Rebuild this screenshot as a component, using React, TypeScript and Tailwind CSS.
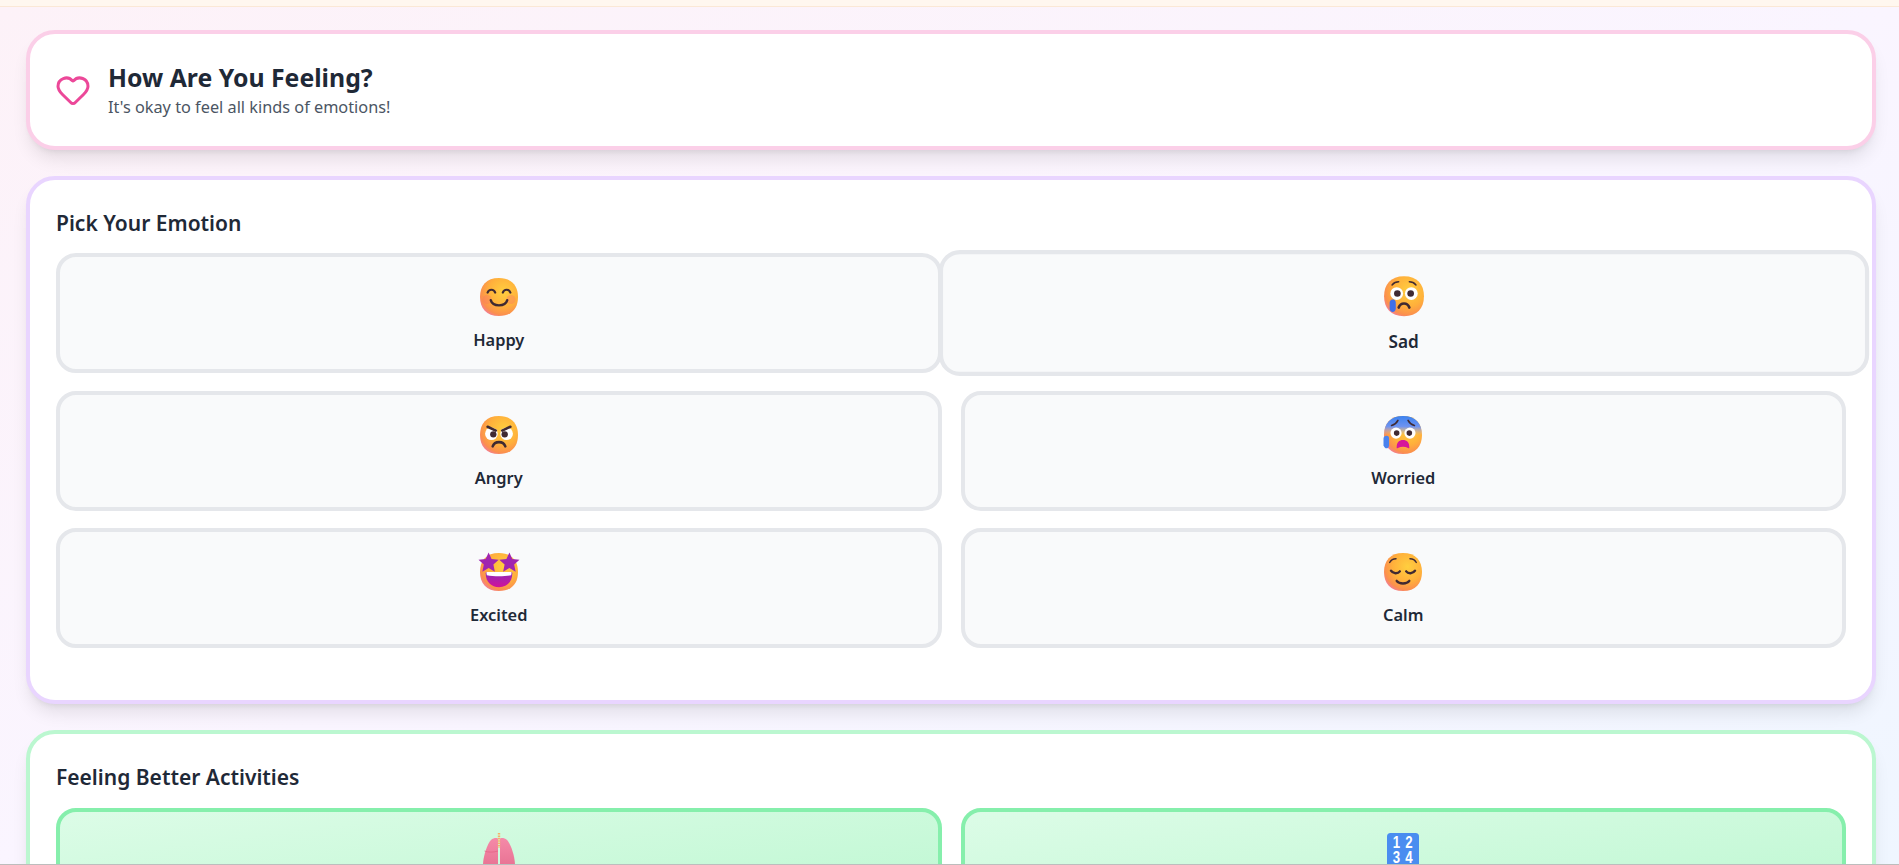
import { useId, type ReactNode } from 'react';
import { Heart } from 'lucide-react';

const DARK = '#402A32';

// rounded face blob shared by the emoji drawings
function Face({ children, size = 38 }: { children?: ReactNode; size?: number }) {
    const id = useId();
    return (
        <svg width={size} height={size} viewBox="1 1 30 30" className="overflow-visible">
            <defs>
                <radialGradient id={id + 'f'} cx="0.62" cy="0.36" r="0.72">
                    <stop offset="0" stopColor="#FFCF3F" />
                    <stop offset="0.55" stopColor="#FFB03B" />
                    <stop offset="0.85" stopColor="#FB8F4E" />
                    <stop offset="1" stopColor="#F27C9C" />
                </radialGradient>
            </defs>
            <path d="M16 1C26 1 31 7 31 16S26 31 16 31 1 25 1 16 6 1 16 1Z" fill={`url(#${id}f)`} />
            {children}
        </svg>
    );
}

function HappyFace() {
    return (
        <Face>
            <circle cx="6.5" cy="18" r="3.6" fill="#F9736B" opacity="0.35" />
            <circle cx="25.5" cy="18" r="3.6" fill="#F9736B" opacity="0.35" />
            <path d="M7 12.5C8 9.5 12 9.5 13 12.5M19 12.5C20 9.5 24 9.5 25 12.5" fill="none" stroke={DARK} strokeWidth="1.7" strokeLinecap="round" />
            <path d="M9.5 18.5C11 24 21 24 22.5 18.5" fill="none" stroke={DARK} strokeWidth="1.9" strokeLinecap="round" />
        </Face>
    );
}

function SadFace() {
    return (
        <Face>
            <circle cx="10.5" cy="14" r="4.8" fill="#fff" />
            <circle cx="21.5" cy="14" r="4.8" fill="#fff" />
            <circle cx="11" cy="14" r="2.5" fill={DARK} />
            <circle cx="21" cy="14" r="2.5" fill={DARK} />
            <path d="M7 7.5C8.5 5.8 10.5 5.2 12 5.2M25 7.5C23.5 5.8 21.5 5.2 20 5.2" fill="none" stroke={DARK} strokeWidth="1.1" strokeLinecap="round" />
            <path d="M12 24.5C13.5 20.5 18.5 20.5 20 24.5" fill="none" stroke={DARK} strokeWidth="2" strokeLinecap="round" />
            <path d="M7.5 18.5C9.5 18.5 9.8 20 9.8 21.5V25C9.8 27 8.6 27.8 7.5 27.8S5.2 27 5.2 25V21C5.2 19.5 6 18.5 7.5 18.5Z" fill="#3F6FEA" />
        </Face>
    );
}

function AngryFace() {
    return (
        <Face>
            <circle cx="10" cy="15" r="5" fill="#fff" />
            <circle cx="22" cy="15" r="5" fill="#fff" />
            <circle cx="11.5" cy="15.5" r="2.5" fill={DARK} />
            <circle cx="20.5" cy="15.5" r="2.5" fill={DARK} />
            <path d="M7 9.5L13.5 12.5M25 9.5L18.5 12.5" fill="none" stroke={DARK} strokeWidth="2" strokeLinecap="round" />
            <path d="M11 25C12.5 20.5 19.5 20.5 21 25" fill="none" stroke={DARK} strokeWidth="2" strokeLinecap="round" />
        </Face>
    );
}

function WorriedFace() {
    const id = useId();
    return (
        <Face>
            <defs>
                <linearGradient id={id} x1="0" y1="0" x2="0" y2="1">
                    <stop offset="0" stopColor="#3B82F0" />
                    <stop offset="0.55" stopColor="#6E93F0" />
                    <stop offset="1" stopColor="#B9B4E8" stopOpacity="0" />
                </linearGradient>
            </defs>
            <path d="M16 1C26 1 31 7 31 16H1C1 7 6 1 16 1Z" fill={`url(#${id})`} />
            <circle cx="10.5" cy="14.5" r="4.4" fill="#fff" />
            <circle cx="21.5" cy="14.5" r="4.4" fill="#fff" />
            <circle cx="11" cy="14.5" r="2.2" fill={DARK} />
            <circle cx="21" cy="14.5" r="2.2" fill={DARK} />
            <path d="M7 8.5C9 8 11 6.5 12 4.5M25 8.5C23 8 21 6.5 20 4.5" fill="none" stroke={DARK} strokeWidth="1.3" strokeLinecap="round" />
            <path d="M11 26C11 21.5 13 20 16 20S21 21.5 21 26C21 26.5 20.5 26.5 20 26.2C17.5 25 14.5 25 12 26.2C11.5 26.5 11 26.5 11 26Z" fill="#D6149B" />
            <path d="M3 16.5C4.5 16.5 5 17.5 5 19V24C5 25.5 4 26.5 3 26.5S1 25.5 0.6 24V19C0.6 17.5 1.5 16.5 3 16.5Z" fill="#4A82EE" />
        </Face>
    );
}

function ExcitedFace() {
    const id = useId();
    const star = 'M0-7.6L2.2-2.8 7.6-2.2 3.6 1.4 4.7 6.8 0 4 -4.7 6.8-3.6 1.4-7.6-2.2-2.2-2.8Z';
    return (
        <Face>
            <defs>
                <linearGradient id={id} x1="0" y1="0" x2="0" y2="1">
                    <stop offset="0" stopColor="#8E2CB8" />
                    <stop offset="1" stopColor="#D1129A" />
                </linearGradient>
            </defs>
            <path d={star} transform="translate(7.8 8.6) scale(1.05)" fill="#A024B0" />
            <path d={star} transform="translate(24.2 8.6) scale(1.05)" fill="#A024B0" />
            <path d="M5.5 17C5.5 16 6.5 16 7.5 16H24.5C25.5 16 26.5 16 26.5 17C26.5 24 22 28 16 28S5.5 24 5.5 17Z" fill={`url(#${id})`} />
            <path d="M6 16.4C6.4 16 7 16 7.5 16H24.5C25 16 25.6 16 26 16.4L25.6 18.6C20 19.6 12 19.6 6.4 18.6Z" fill="#fff" />
        </Face>
    );
}

function CalmFace() {
    return (
        <Face>
            <path d="M5.5 8.5C6.5 6.6 8.5 5.5 10.5 5.5M26.5 8.5C25.5 6.6 23.5 5.5 21.5 5.5" fill="none" stroke={DARK} strokeWidth="1.1" strokeLinecap="round" />
            <path d="M6.5 15C8 17.5 12 17.5 13.5 15.5M25.5 15C24 17.5 20 17.5 18.5 15.5" fill="none" stroke={DARK} strokeWidth="1.9" strokeLinecap="round" />
            <path d="M11 23C13 25.8 19 25.8 21 23" fill="none" stroke={DARK} strokeWidth="1.9" strokeLinecap="round" />
        </Face>
    );
}

function Lungs() {
    return (
        <svg width="32" height="38" viewBox="0 0 32 38">
            <defs>
                <linearGradient id="lung" x1="0" y1="0" x2="0" y2="1">
                    <stop offset="0" stopColor="#F58AA8" />
                    <stop offset="1" stopColor="#E66F90" />
                </linearGradient>
            </defs>
            <path d="M15 6C15 4.5 10.5 4.5 8 7 4 11 0 24 0 32 0 36 3 38 7 38 12 38 15 36 15 32Z" fill="url(#lung)" />
            <path d="M17 6C17 4.5 21.5 4.5 24 7 28 11 32 24 32 32 32 36 29 38 25 38 20 38 17 36 17 32Z" fill="url(#lung)" />
            <path d="M16 0V15" stroke="#F6B26B" strokeWidth="2.4" strokeDasharray="1.6 .8" />
            <path d="M1.5 18C5 19.5 10 19.5 15 18" fill="none" stroke="#E35F82" strokeWidth="0.7" />
        </svg>
    );
}

function Keycap() {
    return (
        <svg width="32" height="38" viewBox="0 0 32 38">
            <rect width="32" height="38" rx="3.5" fill="#4A8DF0" />
            <g fill="#fff" fontFamily="'Liberation Sans', sans-serif" fontWeight="700" fontSize="17" textAnchor="middle">
                <text transform="translate(9.5 15) scale(0.78 1)">1</text>
                <text transform="translate(22 15) scale(0.78 1)">2</text>
                <text transform="translate(9.5 29.5) scale(0.78 1)">3</text>
                <text transform="translate(22 29.5) scale(0.78 1)">4</text>
            </g>
        </svg>
    );
}

const emotions = [
    { label: 'Happy', icon: <HappyFace /> },
    { label: 'Sad', icon: <SadFace />, hovered: true },
    { label: 'Angry', icon: <AngryFace /> },
    { label: 'Worried', icon: <WorriedFace /> },
    { label: 'Excited', icon: <ExcitedFace /> },
    { label: 'Calm', icon: <CalmFace /> },
];

export default function App() {
    return (
        <div className="h-screen overflow-hidden flex flex-col border-b border-[#bdbdbd] font-['Noto_Sans','Open_Sans',sans-serif] text-[#1f2937]">
            {/* strip left over from the header above */}
            <div className="h-[7px] shrink-0 bg-[#fff7ef] border-b border-[#fbe8d6]" />

            <div className="flex-1 overflow-hidden bg-gradient-to-br from-[#fdf2f8] via-[#faf5ff] to-[#eff6ff] pl-[26px] pr-[23px] pt-[23px] flex flex-col gap-[26px]">
                {/* Header */}
                <div className="shrink-0 h-[120px] bg-white border-4 border-[#fbcfe8] rounded-[29px] shadow-[0_12px_18px_-4px_rgba(0,0,0,0.1),0_5px_7px_-5px_rgba(0,0,0,0.1)] pl-[25px] pr-[24px] flex items-center gap-[17px]">
                    <Heart className="w-[36px] h-[36px] text-[#ec4899]" strokeWidth={2} />
                    <div className="pb-[2px]">
                        <h1 className="text-[24.8px] leading-[33px] font-bold mb-[2px]">How Are You Feeling?</h1>
                        <p className="text-[16.3px] leading-[22px] text-[#4b5563]">It's okay to feel all kinds of emotions!</p>
                    </div>
                </div>

                {/* Emotions */}
                <div className="shrink-0 bg-white border-4 border-[#e9d5ff] rounded-[29px] shadow-[0_12px_18px_-4px_rgba(0,0,0,0.1),0_5px_7px_-5px_rgba(0,0,0,0.1)] p-[26px]">
                    <h2 className="text-[21px] leading-[30px] font-semibold mt-[2px] mb-[15px]">Pick Your Emotion</h2>
                    <div className="grid grid-cols-2 gap-x-[19px] gap-y-[17.5px] mb-[26px]">
                        {emotions.map(e => (
                            <button
                                key={e.label}
                                type="button"
                                className={`h-[120px] bg-[#f9fafb] border-4 border-[#e5e7eb] rounded-[20px] flex flex-col items-center pt-[21px] ${e.hovered ? 'scale-105' : ''}`}
                            >
                                {e.icon}
                                <span className="mt-[12px] text-[16.4px] leading-[24px] font-semibold">{e.label}</span>
                            </button>
                        ))}
                    </div>
                </div>

                {/* Activities */}
                <div className="shrink-0 bg-white border-4 border-[#bbf7d0] rounded-[29px] shadow-[0_12px_18px_-4px_rgba(0,0,0,0.1),0_5px_7px_-5px_rgba(0,0,0,0.1)] p-[26px]">
                    <h2 className="text-[21px] leading-[30px] font-semibold mt-[2px] mb-[16px]">Feeling Better Activities</h2>
                    <div className="grid grid-cols-2 gap-x-[19px] gap-y-[17.5px]">
                        {[<Lungs key="l" />, <Keycap key="k" />].map((icon, i) => (
                            <button
                                key={i}
                                type="button"
                                className="h-[120px] bg-gradient-to-br from-[#dcfce7] to-[#bbf7d0] border-4 border-[#86efac] rounded-[20px] flex flex-col items-center pt-[21px]"
                            >
                                {icon}
                            </button>
                        ))}
                    </div>
                </div>
            </div>
        </div>
    );
}
